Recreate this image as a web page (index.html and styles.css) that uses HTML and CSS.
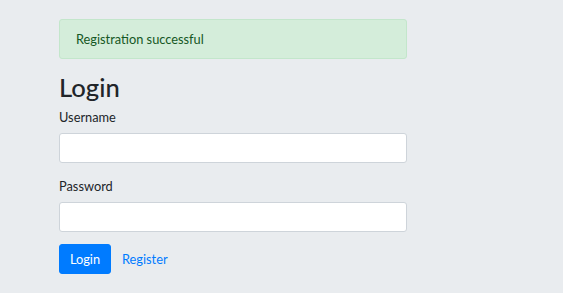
FILE: index.html
```html
<!DOCTYPE html>
<html lang="en">
<head>
<meta charset="utf-8">
<title>Login</title>
<link rel="stylesheet" href="styles.css">
</head>
<body>
<main class="container">
  <div class="alert">Registration successful</div>
  <h2 class="title">Login</h2>
  <form class="form">
    <div class="form-group">
      <label class="label" for="username">Username</label>
      <input class="input" id="username" type="text">
    </div>
    <div class="form-group">
      <label class="label" for="password">Password</label>
      <input class="input" id="password" type="password">
    </div>
    <div class="actions">
      <button class="btn" type="button">Login</button>
      <a class="link" href="#">Register</a>
    </div>
  </form>
</main>
</body>
</html>
```

FILE: styles.css
```css
html, body {
  margin: 0;
  padding: 0;
  background: #e9ecef;
}
body {
  font-family: "Lato", "Open Sans", sans-serif;
  font-size: 12.8px;
  color: #212529;
}
.container {
  width: 348px;
  padding: 19px 0 0 59px;
}
.alert {
  box-sizing: border-box;
  height: 40px;
  padding: 9px 16px;
  line-height: 20px;
  background: #d4edda;
  border: 1px solid #c3e6cb;
  border-radius: 3px;
  color: #155724;
  margin-bottom: 13px;
}
.title {
  margin: 0 0 6px;
  font-size: 25.6px;
  font-weight: 500;
  line-height: 30px;
  color: #212529;
}
.form {
  margin: 0;
}
.form-group {
  display: flex;
  flex-direction: column;
  margin-bottom: 14px;
}
.form-group + .form-group {
  margin-bottom: 12px;
}
.label {
  line-height: 19px;
  margin-bottom: 6px;
  color: #212529;
}
.input {
  box-sizing: border-box;
  width: 348px;
  height: 30px;
  margin: 0;
  border: 1px solid #ced4da;
  border-radius: 3px;
  background: #fff;
  font: inherit;
  padding: 0 10px;
}
.actions {
  display: flex;
  align-items: center;
}
.btn {
  box-sizing: border-box;
  height: 30px;
  width: 52px;
  padding: 0;
  border: 1px solid #007bff;
  border-radius: 3px;
  background: #007bff;
  color: #fff;
  font: inherit;
  line-height: 28px;
}
.link {
  margin-left: 11px;
  color: #007bff;
  text-decoration: none;
}
```
